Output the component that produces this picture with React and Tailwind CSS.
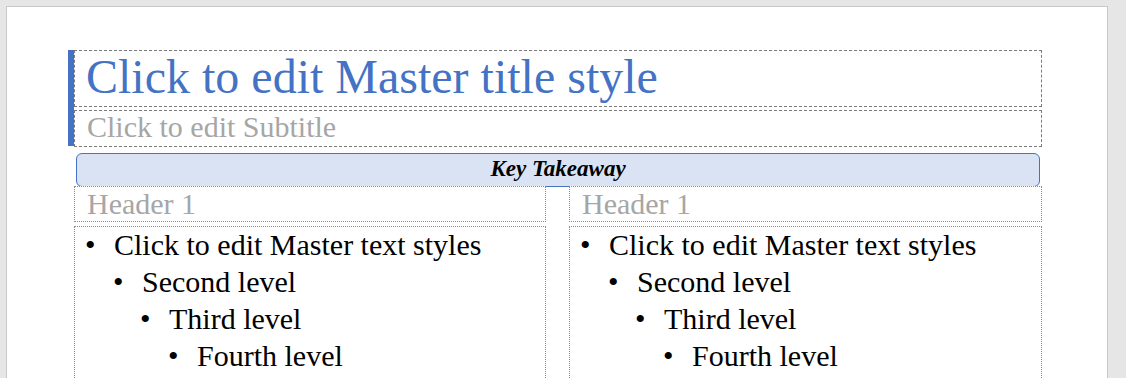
import React from "react";

const serif = { fontFamily: '"Liberation Serif", "Times New Roman", serif' };

const levels = [
  { pad: "pl-[10px]", text: "Click to edit Master text styles" },
  { pad: "pl-[38px]", text: "Second level" },
  { pad: "pl-[65px]", text: "Third level" },
  { pad: "pl-[93px]", text: "Fourth level" },
];

function Column() {
  return (
    <div className="flex flex-col gap-[4px]">
      <div className="relative z-10 h-[36px] border border-dotted border-[#8a8a8a] bg-white pl-[12px] pt-[2px]">
        <p className="text-[30px] leading-none text-[#a6a6a6]">Header 1</p>
      </div>
      <div className="h-[200px] border border-dotted border-[#8a8a8a] pt-[3px]">
        <ul className="flex flex-col gap-[7px]">
          {levels.map((l) => (
            <li key={l.text} className={`flex text-[30px] leading-[30px] text-black ${l.pad}`}>
              <span className="w-[29px] shrink-0">•</span>
              <span className="whitespace-nowrap">{l.text}</span>
            </li>
          ))}
        </ul>
      </div>
    </div>
  );
}

export default function App() {
  return (
    <div className="h-[378px] overflow-hidden bg-[#e6e6e6] pl-[6px] pt-[6px]" style={serif}>
      <div className="h-[420px] w-[1102px] border border-[#c8c8c8] bg-white pl-[61px] pt-[43px]">
        <div className="flex">
          <div className="h-[96px] w-[6px] shrink-0 bg-[#4472c4]" />
          <div className="flex w-[968px] flex-col">
            <div className="h-[57px] border border-dashed border-[#7a7a7a] pl-[11px] pt-[2px]">
              <h1 className="text-[48px] leading-none whitespace-nowrap text-[#4472c4]">
                Click to edit Master title style
              </h1>
            </div>
            <div className="mt-[3px] h-[37px] border border-dashed border-[#7a7a7a] pl-[12px] pt-[1px]">
              <p className="text-[30px] leading-none text-[#a6a6a6]">Click to edit Subtitle</p>
            </div>
            <div className="mx-[2px] mt-[6px] h-[34px] rounded-[6px] border border-[#4472c4] bg-[#dae3f3] pt-[3px] text-center">
              <p className="text-[23px] leading-none font-bold italic text-black">Key Takeaway</p>
            </div>
            <div className="-mt-px grid grid-cols-[472px_473px] gap-[23px]">
              <Column />
              <Column />
            </div>
          </div>
        </div>
      </div>
    </div>
  );
}
